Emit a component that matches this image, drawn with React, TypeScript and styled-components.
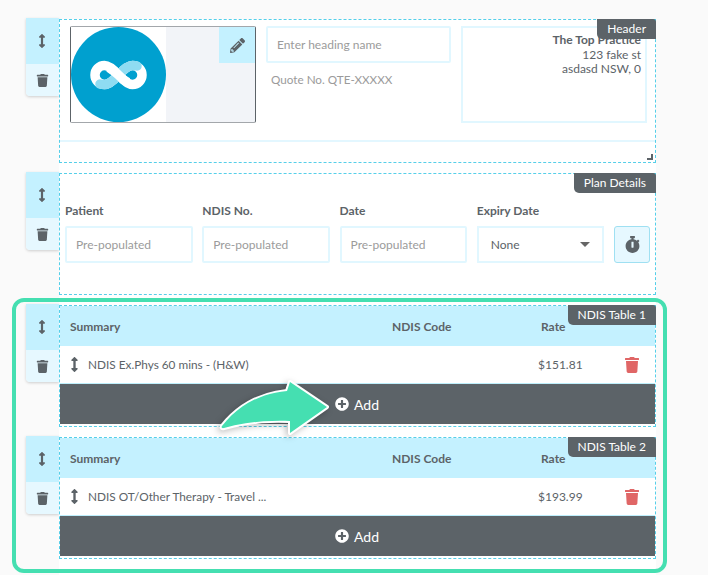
// App.tsx
import React from 'react';
import styled, { createGlobalStyle } from 'styled-components';
import { FaArrowsAltV, FaPencilAlt, FaPlusCircle, FaStopwatch, FaTrash } from 'react-icons/fa';

const GlobalStyle = createGlobalStyle`
  html, body {
    margin: 0;
    padding: 0;
    height: 100%;
    overflow: hidden;
    background: #fafafa;
  }
  * {
    box-sizing: border-box;
  }
`;

const Page = styled.div`
  position: relative;
  width: 708px;
  height: 575px;
  overflow: hidden;
  padding: 19px 0 0 26px;
  background: #fafafa;
  font-family: Lato, "Open Sans", sans-serif;
  font-size: 12px;
  color: #5c6368;
`;

const Row = styled.div`
  display: flex;
`;

const Rail = styled.div`
  flex: 0 0 33px;
  align-self: flex-start;
  margin-top: -1px;
  border-radius: 0 0 0 4px;
  overflow: hidden;
  box-shadow: 0 1px 3px rgba(0, 0, 0, 0.18);
`;

const RailButton = styled.div<{ $active?: boolean }>`
  display: flex;
  align-items: center;
  justify-content: center;
  height: ${p => (p.$active ? 46 : 32)}px;
  padding-right: 1px;
  background: ${p => (p.$active ? '#c4f1ff' : '#e6f8ff')};
  font-size: ${p => (p.$active ? 14 : 13)}px;
`;

const Slot = styled.div<{ $last?: boolean }>`
  flex: 0 0 597px;
  padding-bottom: ${p => (p.$last ? 20 : 10)}px;
  background: #fff;
`;

const Block = styled.section`
  position: relative;
  border: 1px dashed #55cfe9;
  background: #fff;
`;

const Tag = styled.div`
  position: absolute;
  top: -1px;
  right: -1px;
  height: 20px;
  padding: 0 10px;
  line-height: 20px;
  font-size: 12px;
  color: #fff;
  background: #5c6368;
  border-radius: 0 3px 0 5px;
`;

const HeaderBlock = styled(Block)`
  height: 144px;
`;

const HeaderGrid = styled.div`
  display: grid;
  grid-template-columns: 186px 185px 186px;
  column-gap: 10px;
  height: 110px;
  padding: 6px 0 0 10px;
`;

const Rule = styled.div`
  margin-top: 10px;
  height: 2px;
  background: #e3f7ff;
`;

const ResizeHandle = styled.div`
  position: absolute;
  right: 2px;
  bottom: 2px;
  width: 6px;
  height: 6px;
  border-right: 2px solid #5c6368;
  border-bottom: 2px solid #5c6368;
`;

const LogoBox = styled.div`
  position: relative;
  display: flex;
  height: 97px;
  background: #f2f4f8;
  border: 1px solid #5c6368;
  border-top-color: #a3a7ab;
  border-bottom-color: #a3a7ab;
  border-radius: 2px;
`;

const LogoFrame = styled.div`
  flex: 0 0 95px;
  background: #fff;
  line-height: 0;
`;

const EditButton = styled.div`
  position: absolute;
  top: 0;
  right: 0;
  width: 36px;
  height: 36px;
  display: flex;
  align-items: center;
  justify-content: center;
  background: #c4f1ff;
  font-size: 15px;
`;

const HeadingColumn = styled.div`
  display: flex;
  flex-direction: column;
`;

const TextInput = styled.input`
  display: block;
  width: 100%;
  height: 37px;
  padding: 0 9px 1px;
  border: 2px solid #e1f7ff;
  border-radius: 2px;
  outline: none;
  background: #fff;
  font-family: inherit;
  font-size: 12px;
  &::placeholder {
    color: #9b9b9b;
    opacity: 1;
  }
`;

const QuoteNumber = styled.div`
  margin: 8px 0 0 5px;
  font-size: 11.7px;
  line-height: 16px;
  color: #9b9b9b;
`;

const AddressBox = styled.div`
  height: 97px;
  padding: 5px 4px 0 0;
  border: 2px solid #e1f7ff;
  text-align: right;
  line-height: 14.5px;
`;

const PracticeName = styled.div`
  font-weight: 700;
`;

const PlanBlock = styled(Block)`
  height: 122px;
  padding: 29px 0 0 5px;
`;

const FieldGrid = styled.div`
  display: grid;
  grid-template-columns: repeat(4, 127.6px) 36px;
  column-gap: 9.7px;
  align-items: end;
`;

const FieldLabel = styled.div`
  margin-bottom: 8px;
  line-height: 15px;
  font-weight: 700;
`;

const SelectBox = styled.div`
  display: flex;
  align-items: center;
  justify-content: space-between;
  height: 37px;
  padding: 0 12px 1px 12px;
  border: 2px solid #e1f7ff;
`;

const Caret = styled.span`
  width: 0;
  height: 0;
  border-left: 5px solid transparent;
  border-right: 5px solid transparent;
  border-top: 5px solid #666;
`;

const TimerButton = styled.div`
  display: flex;
  align-items: center;
  justify-content: center;
  height: 37px;
  background: #e6f8ff;
  border: 1px solid #9fe0f2;
  border-radius: 3px;
  font-size: 17px;
`;

const TableBlock = styled(Block)`
  height: 122px;
`;

const TableHead = styled.div`
  display: grid;
  grid-template-columns: 322px 149px 1fr;
  align-items: center;
  height: 40px;
  padding-left: 10px;
  background: #c4f1ff;
  font-weight: 700;
`;

const TableRow = styled.div`
  display: grid;
  grid-template-columns: 21px 450px 86px 1fr;
  align-items: center;
  height: 38px;
  padding-left: 7px;
  border-bottom: 1px solid #bdeefb;
`;

const RowItem = styled.span`
  font-size: 11.8px;
`;

const RowGrip = styled.span`
  display: flex;
  font-size: 15px;
`;

const RowDelete = styled.span`
  display: flex;
  color: #e06666;
  font-size: 16px;
`;

const AddBar = styled.div`
  display: flex;
  align-items: center;
  justify-content: center;
  gap: 5px;
  height: 40px;
  padding-right: 1px;
  background: #5c6368;
  color: #fff;
  font-size: 14px;
`;

const FocusFrame = styled.div`
  position: absolute;
  left: 12px;
  top: 298px;
  width: 655px;
  height: 275px;
  border: 4px solid #45dfb1;
  border-radius: 12px;
  pointer-events: none;
`;

const Pointer = styled.svg`
  position: absolute;
  left: 210px;
  top: 372px;
  filter: drop-shadow(-2px 2px 3px rgba(0, 0, 0, 0.25));
`;

const tables = [
  { name: 'NDIS Table 1', item: 'NDIS Ex.Phys 60 mins - (H&W)', rate: '$151.81' },
  { name: 'NDIS Table 2', item: 'NDIS OT/Other Therapy - Travel ...', rate: '$193.99' },
];

const fields = ['Patient', 'NDIS No.', 'Date'];

const Tools: React.FC = () => (
  <Rail>
    <RailButton $active>
      <FaArrowsAltV />
    </RailButton>
    <RailButton>
      <FaTrash />
    </RailButton>
  </Rail>
);

const Logo: React.FC = () => (
  <svg width="95" height="95" viewBox="71 27 95 95">
    <circle cx="118.5" cy="74.5" r="47.5" fill="#00a0cf" />
    <path
      d="M118.5 75C113 69 109 65.5 104.5 65.5C99 65.5 95 70 95 75C95 80 99 84.5 104.5 84.5C109 84.5 113 81 118.5 75C124 69 128 65.5 132.5 65.5C138 65.5 142 70 142 75C142 80 138 84.5 132.5 84.5C128 84.5 124 81 118.5 75Z"
      fill="none"
      stroke="#fff"
      strokeWidth="9.5"
    />
    <path
      d="M137 66C135 65.5 134 65.5 132.5 65.5C128 65.5 124 69 118.5 75C113 81 109 84.5 104.5 84.5C103 84.5 102 84.5 100 84"
      fill="none"
      stroke="#8fdcf2"
      strokeWidth="9.5"
      strokeLinecap="round"
    />
    <path
      d="M109 67.5C112 69.5 115 71.5 118.5 75C122 78.5 125 81 128 82.5"
      fill="none"
      stroke="#fff"
      strokeWidth="9.5"
    />
  </svg>
);

const App: React.FC = () => (
  <Page>
    <GlobalStyle />

    <Row>
      <Tools />
      <Slot>
        <HeaderBlock>
          <Tag>Header</Tag>
          <HeaderGrid>
            <LogoBox>
              <LogoFrame>
                <Logo />
              </LogoFrame>
              <EditButton>
                <FaPencilAlt />
              </EditButton>
            </LogoBox>
            <HeadingColumn>
              <TextInput placeholder="Enter heading name" />
              <QuoteNumber>Quote No. QTE-XXXXX</QuoteNumber>
            </HeadingColumn>
            <AddressBox>
              <PracticeName>The Top Practice</PracticeName>
              <div>123 fake st</div>
              <div>asdasd NSW, 0</div>
            </AddressBox>
          </HeaderGrid>
          <Rule />
          <ResizeHandle />
        </HeaderBlock>
      </Slot>
    </Row>

    <Row>
      <Tools />
      <Slot>
        <PlanBlock>
          <Tag>Plan Details</Tag>
          <FieldGrid>
            {fields.map(label => (
              <div key={label}>
                <FieldLabel>{label}</FieldLabel>
                <TextInput placeholder="Pre-populated" />
              </div>
            ))}
            <div>
              <FieldLabel>Expiry Date</FieldLabel>
              <SelectBox>
                None
                <Caret />
              </SelectBox>
            </div>
            <TimerButton>
              <FaStopwatch />
            </TimerButton>
          </FieldGrid>
        </PlanBlock>
      </Slot>
    </Row>

    {tables.map((table, i) => (
      <Row key={table.name}>
        <Tools />
        <Slot $last={i === tables.length - 1}>
          <TableBlock>
            <Tag>{table.name}</Tag>
            <TableHead>
              <span>Summary</span>
              <span>NDIS Code</span>
              <span>Rate</span>
            </TableHead>
            <TableRow>
              <RowGrip>
                <FaArrowsAltV />
              </RowGrip>
              <RowItem>{table.item}</RowItem>
              <span>{table.rate}</span>
              <RowDelete>
                <FaTrash />
              </RowDelete>
            </TableRow>
            <AddBar>
              <FaPlusCircle />
              Add
            </AddBar>
          </TableBlock>
        </Slot>
      </Row>
    ))}

    <FocusFrame />
    <Pointer width="125" height="66" viewBox="210 372 125 66">
      <path
        d="M222 426C238 406 258 394 287 391L290 382L327 407L290 433L290 421C270 420 245 422 224 428C222 428.500 221 427.500 222 426Z"
        fill="#45dfb1"
        stroke="#fff"
        strokeWidth="4"
        strokeLinejoin="round"
        paintOrder="stroke"
      />
    </Pointer>
  </Page>
);

export default App;
